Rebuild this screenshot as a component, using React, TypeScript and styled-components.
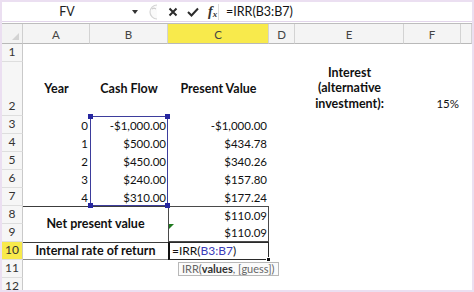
import React from "react";
import styled, { createGlobalStyle } from "styled-components";

const GlobalStyle = createGlobalStyle`
  *, *::before, *::after { box-sizing: border-box; }
  html, body { margin: 0; padding: 0; background: #ebdff1; }
  body { font-family: Lato, "Liberation Sans", Arial, sans-serif; color: #111; }
`;

const Window = styled.div`
  width: 470px;
  height: 288px;
  margin: 2px;
  background: #fff;
  overflow: hidden;
  display: flex;
  flex-direction: column;
  & > * {
    flex-shrink: 0;
  }
`;

const FormulaBar = styled.div`
  height: 20px;
  display: flex;
  align-items: center;
  border-bottom: 1px solid #e2d5ea;
`;

const NameBox = styled.div`
  width: 141px;
  height: 100%;
  display: flex;
  align-items: center;
  padding-right: 5px;
  font-size: 12.5px;
  color: #222;
`;

const NameText = styled.span`
  flex: 1;
  text-align: center;
`;

const Arrow = styled.span`
  width: 0;
  height: 0;
  border-left: 3px solid transparent;
  border-right: 3px solid transparent;
  border-top: 4px solid #333;
`;

const Controls = styled.div`
  width: 76px;
  height: 16px;
  display: flex;
  align-items: center;
  gap: 9px;
  padding-left: 2px;
  border-right: 1px solid #dcdcdc;
`;

const Fx = styled.span`
  font-family: "Liberation Serif", serif;
  font-style: italic;
  font-weight: bold;
  font-size: 14px;
  color: #333;
  sub {
    font-size: 9px;
    vertical-align: -1px;
  }
`;

const FormulaText = styled.div`
  flex: 1;
  padding-left: 7px;
  font-size: 12.5px;
  color: #111;
`;

const Gap = styled.div`
  height: 2px;
  border-bottom: 1px solid #bdbdbd;
`;

const Sheet = styled.div`
  display: grid;
  grid-template-columns: 21px 67px 78px 101px 26px 109px 57px 11px;
  grid-template-rows: 20px 18px 54px repeat(10, 18px);
`;

const Corner = styled.div`
  grid-column: 1;
  grid-row: 1;
  background: #f3f3f3;
  border-right: 1px solid #cfcfcf;
  border-bottom: 1px solid #b9b9b9;
  position: relative;
  &::after {
    content: "";
    position: absolute;
    right: 3px;
    bottom: 3px;
    border-left: 7px solid transparent;
    border-bottom: 7px solid #d3d3d3;
  }
`;

const ColHeader = styled.div<{ $col: number; $active?: boolean }>`
  grid-column: ${(p) => p.$col};
  grid-row: 1;
  display: flex;
  align-items: center;
  justify-content: center;
  padding-top: 2px;
  font-size: 11.5px;
  color: #444;
  background: ${(p) => (p.$active ? "#f8ea4c" : "#f4f4f4")};
  border-right: 1px solid #d3d3d3;
  border-bottom: 1px solid #b9b9b9;
`;

const RowHeader = styled.div<{ $row: number; $active?: boolean }>`
  grid-column: 1;
  grid-row: ${(p) => p.$row + 1};
  display: flex;
  align-items: flex-end;
  justify-content: center;
  padding-bottom: 2px;
  font-size: 12px;
  color: #333;
  background: ${(p) => (p.$active ? "#f8ea4c" : "#f6f6f6")};
  border-right: 1px solid #c9c9c9;
  border-bottom: 1px solid #dedede;
`;

type CellProps = {
  $col: number;
  $row: number;
  $cols?: number;
  $rows?: number;
  $align?: "left" | "center" | "right";
  $valign?: "top" | "center" | "bottom";
  $bold?: boolean;
  $lift?: number;
};

const Cell = styled.div<CellProps>`
  grid-column: ${(p) => p.$col + 1} / span ${(p) => p.$cols ?? 1};
  grid-row: ${(p) => p.$row + 1} / span ${(p) => p.$rows ?? 1};
  display: flex;
  flex-direction: column;
  justify-content: ${(p) =>
    p.$valign === "top" ? "flex-start" : p.$valign === "center" ? "center" : "flex-end"};
  align-items: ${(p) =>
    p.$align === "left" ? "flex-start" : p.$align === "center" ? "center" : "flex-end"};
  text-align: ${(p) => p.$align ?? "right"};
  padding: 0 2px ${(p) => p.$lift ?? 1}px;
  font-size: ${(p) => (p.$bold ? "12.5px" : "11.5px")};
  font-weight: ${(p) => (p.$bold ? "bold" : "normal")};
  line-height: 15.5px;
  white-space: nowrap;
`;

const LabelBlock = styled(Cell)`
  border-top: 1px solid #3c3c3c;
`;

const ReturnLabel = styled(Cell)`
  border-top: 1px solid #3c3c3c;
  border-bottom: 1px solid #8a8a8a;
`;

const PairBox = styled.div`
  grid-column: 4;
  grid-row: 9 / span 2;
  border: 1px solid #4a4a4a;
  display: flex;
  flex-direction: column;
`;

const PairValue = styled.div<{ $flag?: boolean }>`
  flex: 1;
  display: flex;
  align-items: flex-end;
  justify-content: flex-end;
  padding: 0 1px 1px;
  font-size: 11.5px;
  line-height: 15.5px;
  position: relative;
  &::before {
    content: "";
    display: ${(p) => (p.$flag ? "block" : "none")};
    position: absolute;
    left: 0;
    top: 0;
    border-top: 5px solid #1f7a1f;
    border-right: 5px solid transparent;
  }
`;

const ActiveCell = styled.div`
  grid-column: 4;
  grid-row: 11;
  border: 1px solid #2a2a2a;
  border-left: 2px solid #111;
  display: flex;
  align-items: flex-end;
  padding: 0 2px 1px;
  font-size: 12px;
  line-height: 15.5px;
  position: relative;
  z-index: 3;
  white-space: nowrap;
`;

const Ref = styled.span`
  color: #3a3ab8;
`;

const FillHandle = styled.span`
  position: absolute;
  right: -3px;
  bottom: -3px;
  width: 5px;
  height: 5px;
  background: #111;
  border: 1px solid #fff;
`;

const Tooltip = styled.div`
  position: absolute;
  left: 8px;
  top: calc(100% + 3px);
  padding: 0 3px;
  height: 14px;
  display: flex;
  align-items: center;
  font-size: 11px;
  color: #666;
  background: #fbfbfb;
  border: 1px solid #b8b8b8;
  b {
    color: #333;
  }
`;

const RangeBox = styled.div`
  grid-column: 3;
  grid-row: 4 / span 5;
  border: 1px solid #3d3d9c;
  position: relative;
  z-index: 2;
  pointer-events: none;
`;

const Handle = styled.span<{ $x: "left" | "right"; $y: "top" | "bottom" }>`
  position: absolute;
  ${(p) => p.$x}: -3px;
  ${(p) => p.$y}: -3px;
  width: 5px;
  height: 5px;
  background: #2727a0;
`;

const columns = ["A", "B", "C", "D", "E", "F", ""];

const flows = [
  ["0", "-$1,000.00", "-$1,000.00"],
  ["1", "$500.00", "$434.78"],
  ["2", "$450.00", "$340.26"],
  ["3", "$240.00", "$157.80"],
  ["4", "$310.00", "$177.24"],
];

const CloseIcon = () => (
  <svg width="10" height="10" viewBox="0 0 10 10">
    <path d="M1.5 1.5 L8.5 8.5 M8.5 1.5 L1.5 8.5" stroke="#2b2b2b" strokeWidth="2" />
  </svg>
);

const CheckIcon = () => (
  <svg width="12" height="10" viewBox="0 0 12 10">
    <path d="M1 5 L4.5 8.5 L11 1.5" stroke="#2b2b2b" strokeWidth="2" fill="none" />
  </svg>
);

const Grip = () => (
  <svg width="14" height="16" viewBox="0 0 14 16">
    <path d="M12 1 A7 7 0 0 0 12 15" stroke="#d4d4d4" strokeWidth="1.2" fill="#fafafa" />
    <path d="M7 5 L9 4 L11 5" stroke="#c4c4c4" strokeWidth="1" fill="none" />
  </svg>
);

export default function App() {
  return (
    <>
      <GlobalStyle />
      <Window>
        <FormulaBar>
          <NameBox>
            <NameText>FV</NameText>
            <Arrow />
          </NameBox>
          <Controls>
            <Grip />
            <CloseIcon />
            <CheckIcon />
            <Fx>
              f<sub>x</sub>
            </Fx>
          </Controls>
          <FormulaText>=IRR(B3:B7)</FormulaText>
        </FormulaBar>
        <Gap />
        <Sheet>
          <Corner />
          {columns.map((c, i) => (
            <ColHeader key={i} $col={i + 2} $active={c === "C"}>
              {c}
            </ColHeader>
          ))}
          {Array.from({ length: 12 }, (_, i) => (
            <RowHeader key={i} $row={i + 1} $active={i + 1 === 10}>
              {i + 1}
            </RowHeader>
          ))}

          <Cell $col={1} $row={2} $align="center" $valign="center" $bold>
            Year
          </Cell>
          <Cell $col={2} $row={2} $align="center" $valign="center" $bold>
            Cash Flow
          </Cell>
          <Cell $col={3} $row={2} $align="center" $valign="center" $bold>
            Present Value
          </Cell>
          <Cell $col={5} $row={2} $align="center" $bold $lift={5}>
            <span>Interest</span>
            <span>(alternative</span>
            <span>investment):</span>
          </Cell>
          <Cell $col={6} $row={2} $lift={5}>
            15%
          </Cell>

          {flows.map((r, i) => (
            <React.Fragment key={i}>
              <Cell $col={1} $row={3 + i}>
                {r[0]}
              </Cell>
              <Cell $col={2} $row={3 + i}>
                {r[1]}
              </Cell>
              <Cell $col={3} $row={3 + i}>
                {r[2]}
              </Cell>
            </React.Fragment>
          ))}
          <RangeBox>
            <Handle $x="left" $y="top" />
            <Handle $x="right" $y="top" />
            <Handle $x="left" $y="bottom" />
            <Handle $x="right" $y="bottom" />
          </RangeBox>

          <LabelBlock $col={1} $row={8} $cols={2} $rows={2} $align="center" $valign="center" $bold>
            Net present value
          </LabelBlock>
          <PairBox>
            <PairValue>$110.09</PairValue>
            <PairValue $flag>$110.09</PairValue>
          </PairBox>

          <ReturnLabel $col={1} $row={10} $cols={2} $align="center" $bold>
            Internal rate of return
          </ReturnLabel>
          <ActiveCell>
            =IRR(<Ref>B3:B7</Ref>)
            <FillHandle />
            <Tooltip>
              IRR(<b>values</b>, [guess])
            </Tooltip>
          </ActiveCell>
        </Sheet>
      </Window>
    </>
  );
}
